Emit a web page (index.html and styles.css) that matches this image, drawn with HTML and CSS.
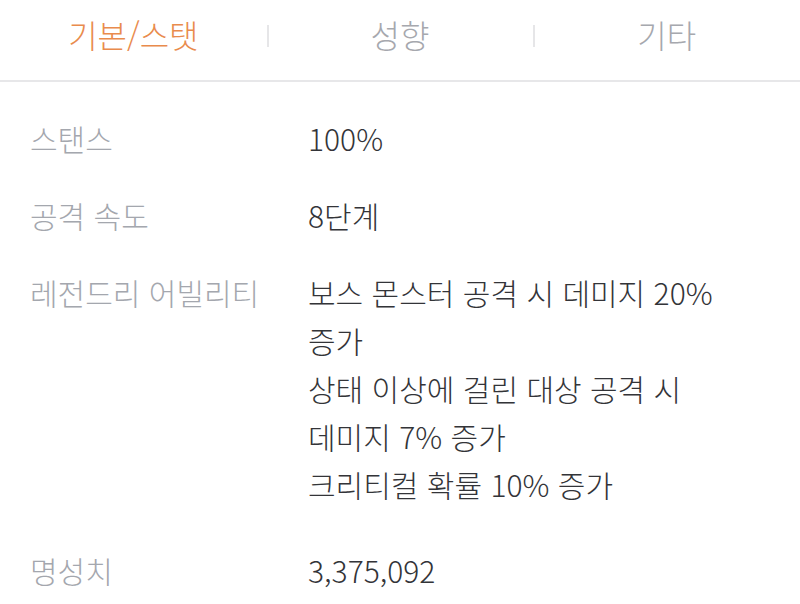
FILE: index.html
```html
<!DOCTYPE html>
<html lang="ko">
<head>
<meta charset="utf-8">
<link rel="stylesheet" href="styles.css">
</head>
<body>
<nav class="tabs">
  <div class="tab active">기본/스탯</div>
  <div class="tab">성향</div>
  <div class="tab">기타</div>
</nav>
<section class="stats">
  <div class="row">
    <div class="label">스탠스</div>
    <div class="value">100%</div>
  </div>
  <div class="row">
    <div class="label">공격 속도</div>
    <div class="value">8단계</div>
  </div>
  <div class="row">
    <div class="label">레전드리 어빌리티</div>
    <div class="value">
      <div>보스 몬스터 공격 시 데미지 20% 증가</div>
      <div>상태 이상에 걸린 대상 공격 시 데미지 7% 증가</div>
      <div>크리티컬 확률 10% 증가</div>
    </div>
  </div>
  <div class="row last">
    <div class="label">명성치</div>
    <div class="value">3,375,092</div>
  </div>
</section>
</body>
</html>
```

FILE: styles.css
```css
html, body {
  margin: 0;
  padding: 0;
  background: #ffffff;
}
body {
  width: 800px;
  height: 604px;
  overflow: hidden;
  font-family: "Noto Sans CJK KR", "Noto Sans", sans-serif;
  font-weight: 300;
}
.tabs {
  display: flex;
  height: 80px;
  border-bottom: 2px solid #e7e7e9;
}
.tab {
  flex: 1;
  display: flex;
  align-items: center;
  justify-content: center;
  font-size: 32px;
  color: #a6a8ae;
  position: relative;
  padding-bottom: 13px;
  box-sizing: border-box;
}
.tab + .tab::before {
  content: "";
  position: absolute;
  left: 0;
  top: 25px;
  width: 2px;
  height: 22px;
  background: #e6e6e8;
}
.tab.active {
  color: #e98b4d;
}
.stats {
  display: flex;
  flex-direction: column;
  gap: 29px;
  padding: 32px 30px 0 30px;
}
.row {
  display: flex;
  font-size: 30px;
  line-height: 48px;
}
.row.last {
  margin-top: 9px;
}
.label {
  width: 278px;
  flex: none;
  color: #a4a7ae;
}
.value {
  width: 425px;
  flex: none;
  color: #333438;
  word-break: keep-all;
}
```
